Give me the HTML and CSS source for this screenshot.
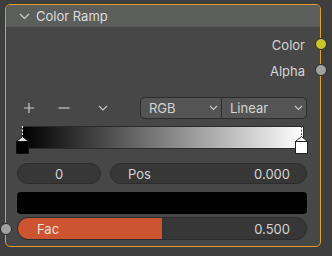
FILE: index.html
```html
<!DOCTYPE html>
<html lang="en">
<head>
  <meta charset="UTF-8">
  <title>Color Ramp</title>
  <link rel="stylesheet" href="styles.css">
</head>
<body>
  <div class="node">
    <div class="node-header">
      <svg class="collapse" width="11" height="7" viewBox="0 0 11 7"><path d="M1 1 L5.5 5.5 L10 1" fill="none" stroke="#d0d0d0" stroke-width="1.2"/></svg>
      <span class="title">Color Ramp</span>
    </div>

    <div class="outputs">
      <div class="output">Color<span class="socket socket-color"></span></div>
      <div class="output">Alpha<span class="socket socket-gray"></span></div>
    </div>

    <div class="content">
      <div class="toolbar">
        <svg class="tool tool-add" width="24" height="14" viewBox="0 0 24 14"><path d="M12 2 V12 M7 7 H17" stroke="#c8c8c8" stroke-width="1.2"/></svg>
        <svg class="tool tool-remove" width="24" height="14" viewBox="0 0 24 14"><path d="M6.5 7 H17.5" stroke="#c8c8c8" stroke-width="1.2"/></svg>
        <svg class="tool tool-menu" width="24" height="14" viewBox="0 0 24 14"><path d="M8 5 L12 9 L16 5" fill="none" stroke="#c8c8c8" stroke-width="1.2"/></svg>
        <div class="select-group">
          <div class="select select-left">RGB<svg width="9" height="6" viewBox="0 0 9 6"><path d="M1 1 L4.5 4.5 L8 1" fill="none" stroke="#c8c8c8" stroke-width="1.2"/></svg></div>
          <div class="select select-right">Linear<svg width="9" height="6" viewBox="0 0 9 6"><path d="M1 1 L4.5 4.5 L8 1" fill="none" stroke="#c8c8c8" stroke-width="1.2"/></svg></div>
        </div>
      </div>

      <div class="ramp">
        <div class="gradient"></div>
        <svg class="marker marker-left" width="14" height="28" viewBox="0 0 14 28">
          <path d="M6.5 0 V11" stroke="#fff" stroke-width="1" stroke-dasharray="2 1.5"/>
          <path d="M0.5 15.5 L6.5 10.5 L12.5 15.5 Z" fill="#e0e0e0" stroke="#111" stroke-width="1"/>
          <rect x="0.5" y="15.5" width="12" height="12" fill="#000" stroke="#111" stroke-width="1"/>
        </svg>
        <svg class="marker marker-right" width="14" height="28" viewBox="0 0 14 28">
          <path d="M6.5 0 V11" stroke="#444" stroke-width="1" stroke-dasharray="2 1.5"/>
          <path d="M0.5 15.5 L6.5 10.5 L12.5 15.5 Z" fill="#fff" stroke="#222" stroke-width="1"/>
          <rect x="0.5" y="15.5" width="12" height="12" fill="#fff" stroke="#222" stroke-width="1"/>
        </svg>
      </div>

      <div class="field-row">
        <div class="field field-index">0</div>
        <div class="field field-pos"><span>Pos</span><span>0.000</span></div>
      </div>

      <div class="swatch"></div>

      <div class="slider">
        <div class="slider-fill" style="width: 50%;"></div>
        <span class="slider-label">Fac</span>
        <span class="slider-value">0.500</span>
        <span class="socket socket-gray socket-input"></span>
      </div>
    </div>
  </div>
</body>
</html>
```

FILE: styles.css
```css
body {
  margin: 0;
  padding: 4px 0 0 5px;
  background-color: #3e3e3e;
  font-family: Inter, "DejaVu Sans", sans-serif;
  font-size: 13px;
  color: #d4d4d4;
}
.node {
  position: relative;
  box-sizing: border-box;
  width: 316px;
  height: 243px;
  border: 1px solid #e89b22;
  border-radius: 5px;
  background-color: #474747;
}
.node-header {
  display: flex;
  align-items: center;
  height: 22px;
  padding-left: 13px;
  background-color: #5c5e5c;
  border-radius: 4px 4px 0 0;
}
.node-header .title {
  margin-left: 6px;
  font-size: 13px;
  color: #dcdcdc;
}
.outputs {
  padding-top: 5px;
}
.output {
  position: relative;
  display: flex;
  justify-content: flex-end;
  align-items: center;
  height: 26px;
  padding-right: 15px;
}
.socket {
  position: absolute;
  width: 10px;
  height: 10px;
  border-radius: 50%;
  border: 1px solid #2b2b2b;
}
.output .socket {
  right: -7px;
  top: 6px;
}
.socket-color {
  background-color: #c8c72a;
}
.socket-gray {
  background-color: #a1a1a1;
}
.content {
  padding: 0 13px 0 11px;
}
.toolbar {
  display: flex;
  align-items: center;
  height: 22px;
  margin-top: 13px;
}
.tool-remove {
  margin-left: 11px;
}
.tool-menu {
  margin-left: 15px;
}
.select-group {
  display: flex;
  margin-left: auto;
  height: 22px;
}
.select {
  box-sizing: border-box;
  display: flex;
  align-items: center;
  justify-content: space-between;
  height: 22px;
  padding: 0 3px 0 8px;
  background-color: #545454;
  border: 1px solid #2c2c2c;
}
.select-left {
  width: 82px;
  border-radius: 5px 0 0 5px;
}
.select-right {
  width: 85px;
  border-left: none;
  border-radius: 0 5px 5px 0;
}
.ramp {
  position: relative;
  height: 27px;
  margin-top: 7px;
}
.gradient {
  box-sizing: border-box;
  height: 23px;
  margin: 0 3px 0 5px;
  background: linear-gradient(to right, #000, #fff);
  border: 1px solid #2a2a2a;
}
.marker {
  position: absolute;
  top: 0;
}
.marker-left {
  left: -1px;
}
.marker-right {
  left: 278px;
}
.field-row {
  display: flex;
  gap: 9px;
  margin-top: 10px;
}
.field {
  box-sizing: border-box;
  height: 21px;
  display: flex;
  align-items: center;
  background-color: #373737;
  border: 1px solid #2c2c2c;
  border-radius: 11px;
}
.field-index {
  width: 84px;
  justify-content: center;
}
.field-pos {
  flex: 1;
  justify-content: space-between;
  padding: 0 16px 0 17px;
}
.swatch {
  height: 22px;
  margin-top: 8px;
  background-color: #000;
  border-radius: 4px;
}
.slider {
  position: relative;
  box-sizing: border-box;
  display: flex;
  align-items: center;
  justify-content: space-between;
  height: 23px;
  margin-top: 3px;
  padding: 0 16px 0 19px;
  background-color: #373737;
  border: 1px solid #2c2c2c;
  border-radius: 11px;
}
.slider-fill {
  position: absolute;
  left: 0;
  top: 0;
  bottom: 0;
  background-color: #cc5430;
  border-radius: 10px 0 0 10px;
}
.slider-label,
.slider-value {
  position: relative;
}
.slider-label {
  color: #e8e0dc;
}
.socket-input {
  left: -18px;
  top: 5px;
}
```
